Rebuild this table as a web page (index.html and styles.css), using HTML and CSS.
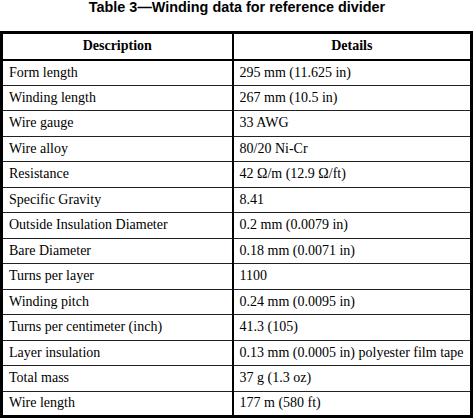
FILE: index.html
```html
<!DOCTYPE html>
<html>
<head>
<meta charset="utf-8">
<link rel="stylesheet" href="styles.css">
</head>
<body>
<div class="page">
  <h1 class="title">Table 3—Winding data for reference divider</h1>
  <table class="data">
    <thead>
      <tr><th>Description</th><th>Details</th></tr>
    </thead>
    <tbody>
      <tr><td>Form length</td><td>295 mm (11.625 in)</td></tr>
      <tr><td>Winding length</td><td>267 mm (10.5 in)</td></tr>
      <tr><td>Wire gauge</td><td>33 AWG</td></tr>
      <tr><td>Wire alloy</td><td>80/20 Ni-Cr</td></tr>
      <tr><td>Resistance</td><td>42 Ω/m (12.9 Ω/ft)</td></tr>
      <tr><td>Specific Gravity</td><td>8.41</td></tr>
      <tr><td>Outside Insulation Diameter</td><td>0.2 mm (0.0079 in)</td></tr>
      <tr><td>Bare Diameter</td><td>0.18 mm (0.0071 in)</td></tr>
      <tr><td>Turns per layer</td><td>1100</td></tr>
      <tr><td>Winding pitch</td><td>0.24 mm (0.0095 in)</td></tr>
      <tr><td>Turns per centimeter (inch)</td><td>41.3 (105)</td></tr>
      <tr><td>Layer insulation</td><td>0.13 mm (0.0005 in) polyester film tape</td></tr>
      <tr><td>Total mass</td><td>37 g (1.3 oz)</td></tr>
      <tr><td>Wire length</td><td>177 m (580 ft)</td></tr>
    </tbody>
  </table>
</div>
</body>
</html>
```

FILE: styles.css
```css
html, body {
  margin: 0;
  padding: 0;
  background: #fff;
}
.page {
  width: 474px;
}
.title {
  margin: 0;
  height: 31px;
  font-family: "Liberation Sans", Arial, sans-serif;
  font-weight: bold;
  font-size: 14.4px;
  line-height: 15px;
  text-align: center;
  color: #000;
  box-sizing: border-box;
}
.data {
  border-collapse: collapse;
  width: 473px;
  border: 3px solid #000;
  font-family: "Liberation Serif", "Times New Roman", serif;
  font-size: 14px;
  color: #000;
}
.data th, .data td {
  border: 1px solid #222;
  padding: 0 6px;
  text-align: left;
  height: 25.5px;
  box-sizing: border-box;
  vertical-align: middle;
}
.data th {
  text-align: center;
  font-weight: bold;
  height: 27px;
  border-bottom: 2px solid #000;
}
.data th:first-child, .data td:first-child {
  width: 231px;
  border-right: 2px solid #000;
}
```
